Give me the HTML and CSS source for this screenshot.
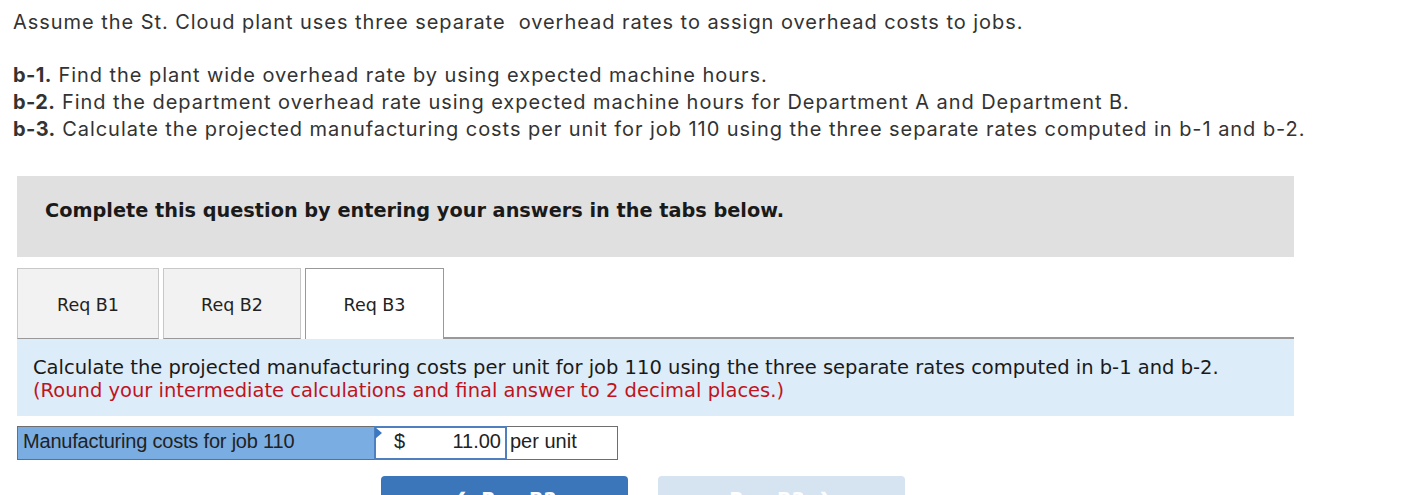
FILE: index.html
```html
<!DOCTYPE html>
<html>
<head>
<meta charset="utf-8">
<link rel="stylesheet" href="styles.css">
</head>
<body>
<div class="page">
  <div class="intro">
    <p class="lead">Assume the St. Cloud plant uses three separate &nbsp;overhead rates to assign overhead costs to jobs.</p>
    <p class="req"><b>b-1.</b> Find the plant wide overhead rate by using expected machine hours.</p>
    <p class="req"><b>b-2.</b> Find the department overhead rate using expected machine hours for Department A and Department B.</p>
    <p class="req"><b>b-3.</b> Calculate the projected manufacturing costs per unit for job 110 using the three separate rates computed in b-1 and b-2.</p>
  </div>

  <div class="panel">
    <div class="notice">Complete this question by entering your answers in the tabs below.</div>

    <div class="tabs">
      <div class="tab">Req B1</div>
      <div class="tab">Req B2</div>
      <div class="tab active">Req B3</div>
      <div class="tab-fill"></div>
    </div>

    <div class="instr">
      <div>Calculate the projected manufacturing costs per unit for job 110 using the three separate rates computed in b-1 and b-2.</div>
      <div class="red">(Round your intermediate calculations and final answer to 2 decimal places.)</div>
    </div>

    <div class="answer">
      <div class="label">Manufacturing costs for job 110</div>
      <div class="input"><span class="dollar">$</span><span class="val">11.00</span></div>
      <div class="unit">per unit</div>
    </div>

    <div class="nav">
      <div class="btn prev">&#10094; &nbsp;Req B2</div>
      <div class="btn next">Req B3 &nbsp;&#10095;</div>
    </div>
  </div>
</div>
</body>
</html>
```
FILE: styles.css
```css
html, body {
  margin: 0;
  padding: 0;
  background: #fff;
}
.page {
  width: 1417px;
  height: 495px;
  overflow: hidden;
}
.intro {
  padding: 9px 0 0 13px;
  font-family: Inter, "Open Sans", sans-serif;
  font-size: 20px;
  letter-spacing: 0.95px;
  color: #333;
}
.intro p {
  margin: 0;
  line-height: 27px;
}
.intro .lead {
  margin-bottom: 26px;
}
.intro b {
  font-weight: 700;
  letter-spacing: 0.4px;
}
.panel {
  margin: 33px 0 0 17px;
  width: 1277px;
}
.notice {
  background: #e0e0e0;
  height: 81px;
  box-sizing: border-box;
  padding: 23px 0 0 28px;
  font-family: "DejaVu Sans", Verdana, sans-serif;
  font-weight: bold;
  font-size: 19.3px;
  color: #1a1a1a;
}
.tabs {
  display: flex;
  margin-top: 11px;
  height: 71px;
}
.tab {
  box-sizing: border-box;
  width: 142px;
  height: 71px;
  background: #f2f2f2;
  border: 1px solid #c8c8c8;
  border-bottom: 1px solid #999;
  margin-right: 4px;
  display: flex;
  align-items: center;
  justify-content: center;
  padding-top: 2px;
  font-family: "DejaVu Sans", Verdana, sans-serif;
  font-size: 17.5px;
  color: #222;
}
.tab:nth-child(2) {
  width: 138px;
}
.tab.active {
  width: 139px;
  background: #fff;
  border: 1px solid #999;
  border-bottom: none;
  margin-right: 0;
}
.tab-fill {
  flex: 1;
  border-bottom: 2px solid #999;
  box-sizing: border-box;
}
.instr {
  background: #dcecf9;
  height: 77px;
  box-sizing: border-box;
  padding: 17px 0 0 16px;
  font-family: "DejaVu Sans", Verdana, sans-serif;
  font-size: 19.5px;
  line-height: 23px;
  color: #1a1a1a;
}
.instr .red {
  color: #c0141c;
}
.answer {
  display: flex;
  margin-top: 10px;
  height: 34px;
  font-family: "Liberation Sans", Arial, sans-serif;
  font-size: 20px;
  color: #222;
}
.label {
  box-sizing: border-box;
  width: 357px;
  background: #7aaee3;
  border: 1px solid #6e6e6e;
  border-right: none;
  padding: 3px 0 0 5px;
  letter-spacing: -0.2px;
}
.input {
  position: relative;
  box-sizing: border-box;
  width: 133px;
  border: 2px solid #4f7fbf;
  background: #fff;
  display: flex;
  justify-content: space-between;
  padding: 2px 4px 0 18px;
}
.input::before {
  content: "";
  position: absolute;
  left: 0;
  top: 0;
  border-top: 6px solid transparent;
  border-bottom: 6px solid transparent;
  border-left: 7px solid #3b78c4;
  transform: translate(-1px, -1px);
}
.unit {
  box-sizing: border-box;
  width: 111px;
  border: 1px solid #6e6e6e;
  border-left: none;
  padding: 3px 0 0 3px;
}
.nav {
  display: flex;
  margin: 16px 0 0 364px;
  gap: 30px;
}
.btn {
  width: 247px;
  height: 44px;
  border-radius: 4px 4px 0 0;
  color: #fff;
  font-family: "DejaVu Sans", Verdana, sans-serif;
  font-weight: bold;
  font-size: 19px;
  text-align: center;
  box-sizing: border-box;
  padding-top: 12px;
}
.btn.prev {
  background: #3a76b9;
}
.btn.next {
  background: #d6e3f1;
}
```
